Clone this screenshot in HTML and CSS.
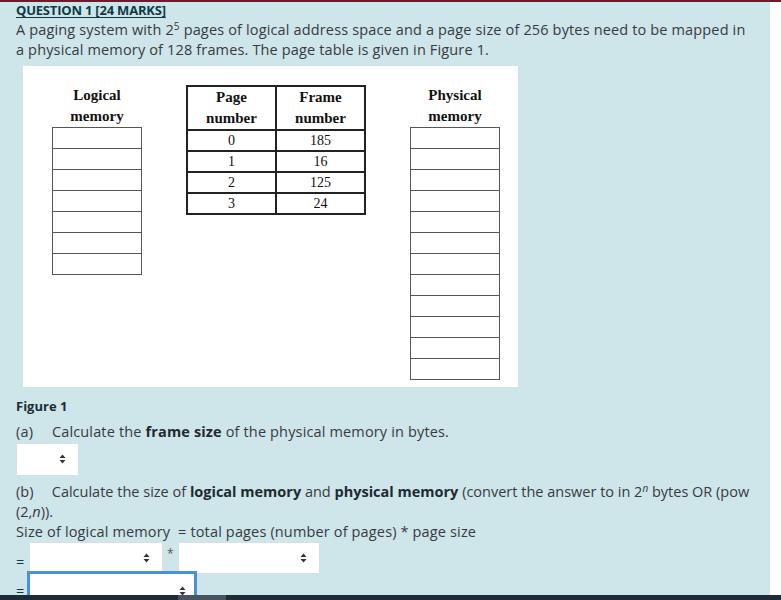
FILE: index.html
```html
<!DOCTYPE html>
<html>
<head>
<meta charset="utf-8">
<link rel="stylesheet" href="styles.css">
</head>
<body>
<div class="topline"></div>
<div class="page">
  <div class="panel">
    <h3 class="qtitle"><u>QUESTION 1 [24 MARKS]</u></h3>
    <p class="intro">A paging system with 2<sup>5</sup> pages of logical address space and a page size of 256 bytes need to be mapped in a physical memory of 128 frames. The page table is given in Figure 1.</p>
    <div class="figure">
      <div class="memcol">
        <div class="memlabel">Logical<br>memory</div>
        <div class="membox">
          <div class="cell"></div><div class="cell"></div><div class="cell"></div><div class="cell"></div><div class="cell"></div><div class="cell"></div><div class="cell"></div>
        </div>
      </div>
      <table class="ptable">
        <tr class="head"><td>Page<br>number</td><td>Frame<br>number</td></tr>
        <tr><td>0</td><td>185</td></tr>
        <tr><td>1</td><td>16</td></tr>
        <tr><td>2</td><td>125</td></tr>
        <tr><td>3</td><td>24</td></tr>
      </table>
      <div class="memcol">
        <div class="memlabel">Physical<br>memory</div>
        <div class="membox">
          <div class="cell"></div><div class="cell"></div><div class="cell"></div><div class="cell"></div><div class="cell"></div><div class="cell"></div><div class="cell"></div><div class="cell"></div><div class="cell"></div><div class="cell"></div><div class="cell"></div><div class="cell"></div>
        </div>
      </div>
    </div>
    <p class="figcap">Figure 1</p>
    <p class="qline"><span class="qnum">(a)</span> Calculate the <b>frame size</b> of the physical memory in bytes.</p>
    <div class="sel sel-a"><span class="caret"><svg width="7" height="10" viewBox="0 0 7 10"><path d="M3.5 0.5 L6.5 4 L0.5 4 Z M0.5 6 L6.5 6 L3.5 9.5 Z" fill="#333"/></svg></span></div>
    <p class="qline qb"><span class="qnum">(b)</span> Calculate the size of <b>logical memory</b> and <b>physical memory</b> (convert the answer to in 2<sup><i>n</i></sup> bytes OR (pow (2,<i>n</i>)).</p>
    <p class="qline qsize">Size of logical memory&nbsp; = total pages (number of pages) * page size</p>
    <div class="eqrow">
      <span class="eq">=</span>
      <div class="sel sel-w1"><span class="caret"><svg width="7" height="10" viewBox="0 0 7 10"><path d="M3.5 0.5 L6.5 4 L0.5 4 Z M0.5 6 L6.5 6 L3.5 9.5 Z" fill="#333"/></svg></span></div>
      <span class="star">*</span>
      <div class="sel sel-w2"><span class="caret"><svg width="7" height="10" viewBox="0 0 7 10"><path d="M3.5 0.5 L6.5 4 L0.5 4 Z M0.5 6 L6.5 6 L3.5 9.5 Z" fill="#333"/></svg></span></div>
    </div>
    <div class="eqrow eqrow2">
      <span class="eq">=</span>
      <div class="sel sel-w3 focus"><span class="caret"><svg width="7" height="10" viewBox="0 0 7 10"><path d="M3.5 0.5 L6.5 4 L0.5 4 Z M0.5 6 L6.5 6 L3.5 9.5 Z" fill="#333"/></svg></span></div>
    </div>
  </div>
</div>
<div class="bottombar"><div class="thumb"></div></div>
</body>
</html>
```
FILE: styles.css
```css
html, body {
  margin: 0;
  padding: 0;
  background: #ffffff;
  height: 600px;
  overflow: hidden;
}
body {
  font-family: "Open Sans", "Noto Sans", sans-serif;
  font-size: 14.5px;
  letter-spacing: 0.15px;
  color: #373b40;
}
.topline {
  height: 2px;
  background: #6e1a2c;
}
.page {
  width: 770px;
}
.panel {
  background: #cee5ea;
  padding: 0 16px 40px 16px;
  min-height: 598px;
  box-sizing: border-box;
}
.qtitle {
  margin: 0;
  font-size: 13px;
  font-weight: 700;
  color: #0f3a45;
  line-height: 17px;
  letter-spacing: -0.2px;
}
.qtitle u {
  text-decoration-thickness: 1px;
  text-underline-offset: 2px;
}
.intro {
  margin: 1px 0 0 0;
  line-height: 20px;
}
sup {
  font-size: 10px;
  line-height: 0;
  vertical-align: 5px;
}
.figure {
  margin: 6px 0 0 7px;
  width: 495px;
  height: 321px;
  background: #ffffff;
  display: flex;
  align-items: flex-start;
  gap: 44px;
  padding: 19px 0 0 29px;
  box-sizing: border-box;
  font-family: "Liberation Serif", serif;
  letter-spacing: 0;
  color: #111;
}
.memcol {
  width: 90px;
  display: flex;
  flex-direction: column;
}
.memlabel {
  height: 42px;
  text-align: center;
  font-weight: 700;
  font-size: 15px;
  line-height: 21px;
}
.membox {
  border: 1.5px solid #555;
  border-bottom: none;
}
.cell {
  height: 20px;
  border-bottom: 1.5px solid #555;
}
.ptable {
  border-collapse: collapse;
  width: 180px;
  font-size: 14px;
  text-align: center;
}
.ptable td {
  border: 2px solid #222;
  height: 19px;
  padding: 0;
  line-height: 19px;
  width: 50%;
}
.ptable .head td {
  height: 40px;
  font-weight: 700;
  font-size: 15px;
  line-height: 21px;
}
.figcap {
  margin: 9px 0 0 0;
  font-weight: 700;
  font-size: 13px;
  letter-spacing: 0;
  color: #1a2e35;
  line-height: 20px;
}
.qline {
  margin: 6px 0 0 0;
  line-height: 20px;
}
.qline b {
  color: #1e2a30;
}
.qnum {
  display: inline-block;
  width: 32px;
}
.qb {
  margin-top: 6px;
  letter-spacing: 0;
}
.qsize {
  margin-top: 0;
}
.sel {
  position: relative;
  background: #fff;
  border: 1px solid #d7e0e3;
  height: 30px;
  box-sizing: border-box;
}
.sel-a {
  width: 63px;
  height: 33px;
  margin-top: 1px;
}
.caret {
  position: absolute;
  right: 12px;
  top: 10px;
  line-height: 0;
}
.eqrow {
  display: flex;
  align-items: flex-start;
  margin-top: 0;
}
.eq {
  width: 13px;
  line-height: 20px;
  padding-top: 10px;
  color: #0f3a45;
}
.star {
  width: 15px;
  text-align: center;
  font-size: 12px;
  padding-top: 3px;
  color: #555;
}
.sel-w1 { width: 134px; height: 32px; }
.sel-w2 { width: 142px; height: 32px; }
.eqrow2 {
  margin-top: -3px;
}
.sel-w3 {
  width: 170px;
  height: 40px;
  border: 3px solid #4a90d9;
  margin-left: -2px;
}
.sel-w3 .caret { right: 8px; top: 12px; }
.bottombar {
  position: fixed;
  left: 0;
  right: 0;
  bottom: 0;
  height: 5px;
  background: #1d2c38;
}
.thumb {
  position: absolute;
  left: 178px;
  width: 48px;
  top: 0;
  bottom: 0;
  background: #46555f;
}
```
